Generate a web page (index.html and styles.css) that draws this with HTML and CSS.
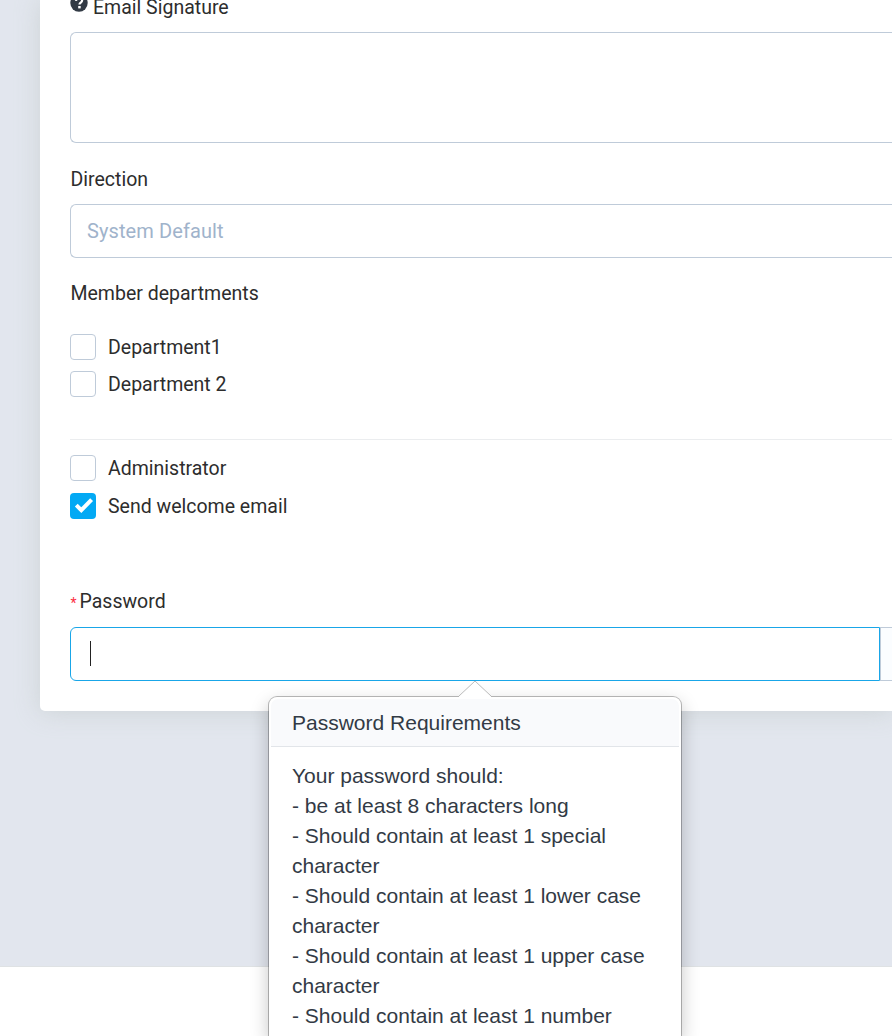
FILE: index.html
```
<!DOCTYPE html>
<html lang="en">
	<head>
		<title>New Staff Member</title>
		<meta charset="utf-8">
		<link rel="stylesheet" href="styles.css">
	</head>
	<body>
		<div class="content">
			<div class="panel">
				<div class="label label-signature">
					<svg class="help-icon" viewBox="0 0 18 18" width="18" height="18">
						<circle cx="9" cy="9" r="8.7" fill="#323a45"/>
						<path d="M6 6.9C6.3 4.9 7.5 4 9.1 4c1.7 0 3 1 3 2.6 0 2-2.6 2.1-2.6 4" fill="none" stroke="#fff" stroke-width="2.2"/>
						<rect x="8.2" y="12" width="2.5" height="2.4" fill="#fff"/>
					</svg>
					<label>Email Signature</label>
				</div>
				<div class="field textarea"></div>

				<div class="label label-direction">Direction</div>
				<div class="field select"><span>System Default</span></div>

				<div class="label label-departments">Member departments</div>
				<div class="checkbox"><span class="box"></span>Department1</div>
				<div class="checkbox"><span class="box"></span>Department 2</div>

				<hr class="divider">

				<div class="checkbox"><span class="box"></span>Administrator</div>
				<div class="checkbox">
					<span class="box checked">
						<svg viewBox="0 0 26 26" width="26" height="26">
							<path d="M6.3 12.2l5 5L21.6 6.6" fill="none" stroke="#fff" stroke-width="4"/>
						</svg>
					</span>Send welcome email
				</div>

				<div class="label label-password"><span class="req">*</span>Password</div>
				<div class="input-group">
					<div class="field password">
						<span class="caret"></span>
						<div class="popover">
							<svg class="arrow" viewBox="0 0 34 18" width="34" height="18">
								<path d="M1 16L17 1l16 15v2H1z" fill="#fff"/>
								<path d="M1 16L17 1l16 15" fill="none" stroke="#bcbcbc"/>
							</svg>
							<h3 class="popover-title">Password Requirements</h3>
							<div class="popover-content">
								Your password should:<br>
								- be at least 8 characters long<br>
								- Should contain at least 1 special character<br>
								- Should contain at least 1 lower case character<br>
								- Should contain at least 1 upper case character<br>
								- Should contain at least 1 number
							</div>
						</div>
					</div>
					<div class="addon"></div>
				</div>
			</div>
		</div>
	</body>
</html>
```
FILE: styles.css
```
* {
	box-sizing: border-box;
}
html, body {
	height: 100%;
}
body {
	margin: 0;
	overflow: hidden;
	background-color: #ffffff;
	color: #2d2d2d;
	font-family: Roboto, "Liberation Sans", sans-serif;
	font-size: 19.5px;
	line-height: 28px;
}
.content {
	height: 967px;
	padding-left: 40px;
	background-color: #e2e6ee;
	border-bottom: 1px solid #dfe2e4;
}
.panel {
	height: 711px;
	padding-left: 30px;
	background-color: #ffffff;
	border-bottom-left-radius: 5px;
	box-shadow: 0 1px 25px rgba(180,190,185,0.45);
}
.label {
	height: 28px;
	padding-left: 0.5px;
}
.label-signature {
	display: flex;
	height: 32px;
	padding-left: 0;
	gap: 5px;
}
.label-signature label {
	height: 26px;
	margin-top: -6px;
}
.help-icon {
	margin-top: -6px;
}
.label-direction {
	margin: 23px 0 10px;
}
.label-departments {
	margin: 22px 0 25.5px;
}
.field {
	border: 1px solid #bfcbd9;
	border-right: none;
	border-radius: 6px 0 0 6px;
	background-color: #ffffff;
}
.textarea {
	height: 111px;
}
.select {
	height: 54px;
	padding: 12px 16px;
	color: #a0b3cb;
	font-size: 20px;
	letter-spacing: 0.1px;
}
.checkbox {
	display: flex;
	align-items: center;
	gap: 12px;
	height: 37.5px;
	padding: 1px 0 10px;
}
.box {
	flex: none;
	width: 26px;
	height: 26px;
	margin-bottom: 2px;
	border: 1px solid #bfcbd9;
	border-radius: 4px;
}
.checked {
	border: none;
	background-color: #03a9f4;
}
.checked svg {
	display: block;
}
.divider {
	height: 1px;
	margin: 30.5px 0 15px;
	border: none;
	background-color: #ebedef;
}
.label-password {
	margin: 58px 0 11px;
}
.req {
	margin-right: 3px;
	color: #fc2d42;
	font-size: 14px;
}
.input-group {
	display: flex;
}
.password {
	position: relative;
	width: 810px;
	height: 54px;
	padding: 13px 19px;
	border: 1px solid #19a6e8;
}
.caret {
	display: block;
	width: 1px;
	height: 25px;
	background-color: #222222;
}
.addon {
	flex: 1;
	border: 1px solid #bfcbd9;
	border-right: none;
	background-color: #fbfdff;
}

/* password hint */
.popover {
	position: absolute;
	top: 68px;
	left: 197px;
	width: 414px;
	height: 340px;
	padding: 2px;
	border: 1px solid rgba(0,0,0,0.26);
	border-bottom: none;
	border-radius: 9px 9px 0 0;
	background-color: #ffffff;
	background-clip: padding-box;
	box-shadow: 0 7px 18px rgba(0,0,0,0.22);
	color: #323a45;
	font-family: "Liberation Sans", Arial, sans-serif;
	font-size: 21px;
	line-height: 30px;
}
.arrow {
	position: absolute;
	top: -17px;
	left: 189px;
}
.popover-title {
	height: 48px;
	margin: 0;
	padding: 9px 21px;
	border-bottom: 1px solid #e2e5e9;
	border-radius: 7px 7px 0 0;
	background-color: #f9fafc;
	font-size: 21px;
	font-weight: normal;
}
.popover-content {
	padding: 14px 21px 0;
}
```
